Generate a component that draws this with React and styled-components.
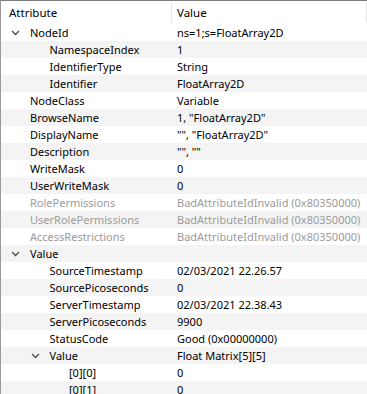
import React from 'react'
import styled, { createGlobalStyle } from 'styled-components'

const GlobalStyle = createGlobalStyle`
  html, body {
    margin: 0;
    padding: 0;
    background: #ffffff;
  }
  #root {
    width: 367px;
    height: 394px;
    overflow: hidden;
  }
`

const rows = [
  { name: 'NodeId', value: 'ns=1;s=FloatArray2D', level: 0, open: true },
  { name: 'NamespaceIndex', value: '1', level: 1 },
  { name: 'IdentifierType', value: 'String', level: 1 },
  { name: 'Identifier', value: 'FloatArray2D', level: 1 },
  { name: 'NodeClass', value: 'Variable', level: 0 },
  { name: 'BrowseName', value: '1, "FloatArray2D"', level: 0 },
  { name: 'DisplayName', value: '"", "FloatArray2D"', level: 0 },
  { name: 'Description', value: '"", ""', level: 0 },
  { name: 'WriteMask', value: '0', level: 0 },
  { name: 'UserWriteMask', value: '0', level: 0 },
  { name: 'RolePermissions', value: 'BadAttributeIdInvalid (0x80350000)', level: 0, disabled: true },
  { name: 'UserRolePermissions', value: 'BadAttributeIdInvalid (0x80350000)', level: 0, disabled: true },
  { name: 'AccessRestrictions', value: 'BadAttributeIdInvalid (0x80350000)', level: 0, disabled: true },
  { name: 'Value', value: '', level: 0, open: true },
  { name: 'SourceTimestamp', value: '02/03/2021 22.26.57', level: 1 },
  { name: 'SourcePicoseconds', value: '0', level: 1 },
  { name: 'ServerTimestamp', value: '02/03/2021 22.38.43', level: 1 },
  { name: 'ServerPicoseconds', value: '9900', level: 1 },
  { name: 'StatusCode', value: 'Good (0x00000000)', level: 1 },
  { name: 'Value', value: 'Float Matrix[5][5]', level: 1, open: true },
  { name: '[0][0]', value: '0', level: 2 },
  { name: '[0][1]', value: '0', level: 2 },
]

const Frame = styled.div`
  box-sizing: border-box;
  width: 367px;
  height: 394px;
  border-top: 1px solid #7d7d7d;
  border-left: 1px solid #9a9a9a;
  font-family: "Noto Sans", "Open Sans", sans-serif;
  font-size: 11px;
  color: #000000;
  overflow: hidden;
`

const Header = styled.div`
  display: grid;
  grid-template-columns: 171px 1fr;
  height: 23px;
  font-size: 11.5px;
`

const HeaderCell = styled.div`
  display: flex;
  align-items: center;
  padding-left: ${(p) => p.$pad}px;
  border-right: 1px solid #e5e5e5;
  margin: 1px 0 1px;
  line-height: 1;
`

const Row = styled.div`
  display: grid;
  grid-template-columns: 171px 1fr;
  height: 17px;
  background: ${(p) => (p.$alt ? '#f4f4f4' : '#ffffff')};
  color: ${(p) => (p.$disabled ? '#9b9b9b' : '#000000')};
  white-space: nowrap;
`

const NameCell = styled.div`
  display: flex;
  align-items: center;
  padding-left: ${(p) => 9 + p.$level * 19.5}px;
  overflow: hidden;
`

const Toggle = styled.span`
  display: flex;
  align-items: center;
  width: 20px;
  flex: none;
`

const ValueCell = styled.div`
  display: flex;
  align-items: center;
  padding-left: 5px;
  overflow: hidden;
`

const Chevron = () => (
  <svg width="9" height="6" viewBox="0 0 9 6" style={{ marginLeft: 1 }}>
    <path d="M1 1 L4.5 4.5 L8 1" fill="none" stroke="#4a4a4a" strokeWidth="1.3" />
  </svg>
)

const App = () => (
  <>
    <GlobalStyle />
    <Frame>
      <Header>
        <HeaderCell $pad={8}>Attribute</HeaderCell>
        <HeaderCell $pad={5}>Value</HeaderCell>
      </Header>
      {rows.map((r, i) => (
        <Row key={i} $alt={i % 2 === 1} $disabled={r.disabled}>
          <NameCell $level={r.level}>
            <Toggle>{r.open && <Chevron />}</Toggle>
            {r.name}
          </NameCell>
          <ValueCell>{r.value}</ValueCell>
        </Row>
      ))}
    </Frame>
  </>
)

export default App
